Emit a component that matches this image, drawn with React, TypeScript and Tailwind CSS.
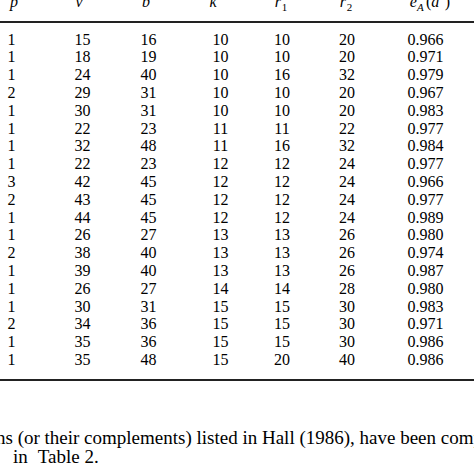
import React from "react";

type Row = [string, string, string, string, string, string, string];

const rows: Row[] = [
  ["1", "15", "16", "10", "10", "20", "0.966"],
  ["1", "18", "19", "10", "10", "20", "0.971"],
  ["1", "24", "40", "10", "16", "32", "0.979"],
  ["2", "29", "31", "10", "10", "20", "0.967"],
  ["1", "30", "31", "10", "10", "20", "0.983"],
  ["1", "22", "23", "11", "11", "22", "0.977"],
  ["1", "32", "48", "11", "16", "32", "0.984"],
  ["1", "22", "23", "12", "12", "24", "0.977"],
  ["3", "42", "45", "12", "12", "24", "0.966"],
  ["2", "43", "45", "12", "12", "24", "0.977"],
  ["1", "44", "45", "12", "12", "24", "0.989"],
  ["1", "26", "27", "13", "13", "26", "0.980"],
  ["2", "38", "40", "13", "13", "26", "0.974"],
  ["1", "39", "40", "13", "13", "26", "0.987"],
  ["1", "26", "27", "14", "14", "28", "0.980"],
  ["1", "30", "31", "15", "15", "30", "0.983"],
  ["2", "34", "36", "15", "15", "30", "0.971"],
  ["1", "35", "36", "15", "15", "30", "0.986"],
  ["1", "35", "48", "15", "20", "40", "0.986"],
];

// fixed 48px cells, offsets put each column on its centre line
const bodyCols = [
  "ml-[-12.5px]",
  "ml-[23px]",
  "ml-[18px]",
  "ml-[24px]",
  "ml-[13.5px]",
  "ml-[17px]",
  "ml-[30.5px]",
];

const headCols = [
  "ml-[-10px]",
  "ml-[17px]",
  "ml-[19px]",
  "ml-[19px]",
  "ml-[20px]",
  "ml-[17px]",
  "ml-[36px]",
];

const Sub: React.FC<{ children: React.ReactNode }> = ({ children }) => (
  <span className="not-italic text-[11px] leading-none relative top-[4px] ml-[1px]">
    {children}
  </span>
);

const headers: React.ReactNode[] = [
  <span className="italic">p</span>,
  <span className="italic">v</span>,
  <span className="italic">b</span>,
  <span className="italic">k</span>,
  <span className="italic">
    r<Sub>1</Sub>
  </span>,
  <span className="italic">
    r<Sub>2</Sub>
  </span>,
  <span className="italic whitespace-nowrap">
    e
    <span className="relative inline-block w-[9px] text-[11px] leading-none">
      <span className="absolute left-[0px] top-[-10px] not-italic">′</span>
      <span className="relative top-[4px]">A</span>
    </span>
    <span className="not-italic">(</span>d
    <span className="not-italic text-[11px] leading-none relative top-[-5px]">*</span>
    <span className="not-italic">)</span>
  </span>,
];

const Rule = () => <div className="h-[2px] w-full bg-[#222]" />;

export default function App() {
  return (
    <div className="w-[474px] h-[474px] overflow-hidden bg-white text-black font-['Liberation_Serif',serif]">
      <div className="flex h-[16px] text-[16px] leading-[16px] mt-[-6px]">
        {headers.map((h, i) => (
          <div
            key={i}
            className={`w-[48px] h-[16px] shrink-0 flex justify-center ${headCols[i]}`}
          >
            {h}
          </div>
        ))}
      </div>

      <div className="mt-[11px]">
        <Rule />
      </div>

      <div className="mt-[7.6px] text-[16px] leading-[17.8px]">
        {rows.map((r, ri) => (
          <div key={ri} className="flex h-[17.8px]">
            {r.map((cell, ci) => (
              <div
                key={ci}
                className={`w-[48px] shrink-0 flex justify-center ${bodyCols[ci]}`}
              >
                {cell}
              </div>
            ))}
          </div>
        ))}
      </div>

      <div className="mt-[10px]">
        <Rule />
      </div>

      <div className="mt-[47px] text-[19px] leading-[19px]">
        <p className="whitespace-nowrap ml-[-4px]">
          ns (or their complements) listed in Hall (1986), have been computed
        </p>
        <p className="whitespace-nowrap ml-[13px]">
          in<span className="ml-[10px]">Table 2.</span>
        </p>
      </div>
    </div>
  );
}
